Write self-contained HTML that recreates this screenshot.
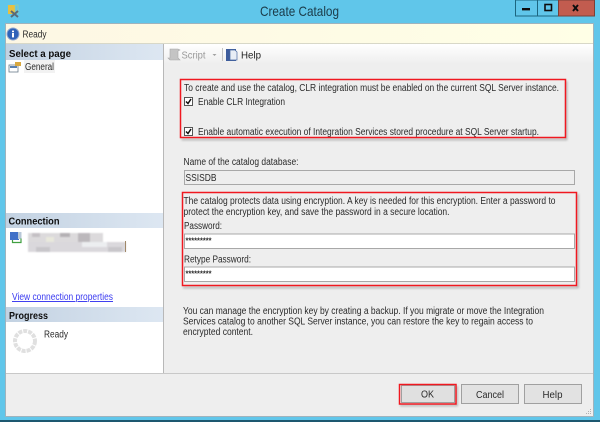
<!DOCTYPE html>
<html><head><meta charset="utf-8"><style>
html,body{margin:0;padding:0;background:#60c6ea;}
svg{display:block;}
text{font-family:"Liberation Sans",sans-serif;font-size:9.7px;fill:#2a2a2a;}
.b{font-weight:bold;fill:#111;font-size:10px;}
</style></head><body>
<svg width="600" height="422" viewBox="0 0 600 422" xmlns="http://www.w3.org/2000/svg">
<defs>
<linearGradient id="hd" x1="0" x2="1" y1="0" y2="0"><stop offset="0" stop-color="#c3d2e2"/><stop offset="1" stop-color="#dde7f2"/></linearGradient>
<linearGradient id="yl" x1="0" x2="1" y1="0" y2="0"><stop offset="0" stop-color="#fdf7e4"/><stop offset="1" stop-color="#ffffe6"/></linearGradient>
<linearGradient id="tb" x1="0" x2="0" y1="0" y2="1"><stop offset="0" stop-color="#ffffff"/><stop offset="1" stop-color="#eeeeee"/></linearGradient>
<filter id="s" x="-5%" y="-10%" width="110%" height="125%"><feGaussianBlur stdDeviation="1"/></filter>
<filter id="bl"><feGaussianBlur stdDeviation="0.3"/></filter>
<filter id="bl2"><feGaussianBlur stdDeviation="0.8"/></filter>
</defs>
<rect width="600" height="422" fill="#60c6ea"/>
<rect x="0" y="420" width="600" height="2" fill="#1d5870"/>
<rect x="5" y="23" width="589" height="394" fill="#9fb3bd"/>
<rect x="6" y="24" width="587" height="392" fill="#eeeeee"/>
<rect x="6" y="24" width="587" height="20" fill="url(#yl)"/>
<rect x="6" y="43" width="587" height="1" fill="#d8d8c8"/>
<rect x="6" y="44" width="157" height="329" fill="#ffffff"/>
<rect x="163" y="44" width="1" height="329" fill="#b8b8b8"/>
<rect x="6" y="373" width="587" height="1" fill="#c8c8c8"/>
<rect x="164" y="44" width="429" height="20" fill="url(#tb)"/>
<rect x="6" y="44" width="157" height="16" fill="url(#hd)"/>
<rect x="6" y="213" width="157" height="15" fill="url(#hd)"/>
<rect x="6" y="307" width="157" height="15" fill="url(#hd)"/>

<g filter="url(#bl)">
<!-- title -->
<text x="260" y="16" style="font-size:13.6px;fill:#1a3a48" lengthAdjust="spacingAndGlyphs" textLength="79">Create Catalog</text>
<!-- app icon -->
<rect x="8" y="5" width="7" height="9" fill="#e8c040"/>
<rect x="15" y="5" width="3" height="8" fill="none" stroke="#9ccf9c" stroke-width=".7"/>
<path d="M11 17l7-6M11 11l7 6" stroke="#5a6a78" stroke-width="2" fill="none"/>
<!-- window buttons -->
<rect x="515.5" y="0" width="22" height="16" fill="#60c6ea" stroke="#1f6680"/>
<rect x="537.5" y="0" width="21" height="16" fill="#60c6ea" stroke="#1f6680"/>
<rect x="558.5" y="0" width="36" height="16" fill="#c25c50" stroke="#7a4038"/>
<rect x="522" y="8" width="8" height="2.4" fill="#111"/>
<rect x="545" y="4.5" width="6.5" height="6" fill="none" stroke="#111" stroke-width="1.6"/>
<path d="M573 5l5 6M578 5l-5 6" stroke="#111" stroke-width="1.9"/>
<!-- Ready bar -->
<circle cx="13" cy="34" r="6" fill="#2f62b8" stroke="#8fa8d0"/>
<rect x="12" y="33" width="2" height="4.4" fill="#fff"/><rect x="12" y="30.6" width="2" height="1.6" fill="#fff"/>
<text x="22.5" y="37.5" lengthAdjust="spacingAndGlyphs" textLength="24">Ready</text>
<!-- left -->
<text class="b" x="9" y="57" lengthAdjust="spacingAndGlyphs" textLength="62">Select a page</text>
<rect x="24" y="60" width="31" height="13" fill="#f2f2f2"/>
<text x="25" y="70" lengthAdjust="spacingAndGlyphs" textLength="29">General</text>
<rect x="9" y="65" width="9" height="7" fill="#fff" stroke="#6a7a8a" stroke-width=".8"/>
<rect x="10" y="66" width="7" height="2" fill="#5a80b0"/>
<path d="M15 62h6v4h-6z" fill="#d8a840"/>
<text class="b" x="8.5" y="224.5" lengthAdjust="spacingAndGlyphs" textLength="51">Connection</text>
<rect x="10" y="232" width="9" height="8" fill="#4070c8"/>
<rect x="18" y="232" width="3.5" height="7" fill="#b8c8d8"/>
<path d="M12.5 240v2.5h8.5v-4" stroke="#40a040" stroke-width="1.2" fill="none"/>
<text x="12" y="300" lengthAdjust="spacingAndGlyphs" textLength="101" style="fill:#3a3af0;text-decoration:underline">View connection properties</text>
<text class="b" x="9" y="319" lengthAdjust="spacingAndGlyphs" textLength="39">Progress</text>
<text x="44" y="337.5" lengthAdjust="spacingAndGlyphs" textLength="24">Ready</text>
<circle cx="25" cy="341" r="10" fill="none" stroke="#e0e0e0" stroke-width="4" stroke-dasharray="4 1"/>
<!-- toolbar -->
<path d="M170 49h8l2 1-2 1v7l2 2h-10l-2-2h2v-7z" fill="#c4c4c4" stroke="#a8a8a8" stroke-width=".6"/>
<text x="181.5" y="58.5" style="fill:#9a9a9a" lengthAdjust="spacingAndGlyphs" textLength="24">Script</text>
<path d="M212.5 54h4l-2 2z" fill="#a0a0a0"/>
<rect x="222" y="48" width="1" height="13" fill="#c4c4c4"/>
<rect x="226" y="49" width="10" height="12" fill="#3c5c9c"/>
<path d="M230 50h5l2 2v8h-7z" fill="#e8eef6" stroke="#4a6aa0" stroke-width=".7"/>
<text x="241" y="58.5" style="fill:#222" lengthAdjust="spacingAndGlyphs" textLength="20">Help</text>
<!-- section 1 -->
<text x="184" y="91" lengthAdjust="spacingAndGlyphs" textLength="375">To create and use the catalog, CLR integration must be enabled on the current SQL Server instance.</text>
<rect x="184.5" y="97.5" width="8" height="8" fill="#fff" stroke="#555"/>
<path d="M186 101.5l2 2 3-4.5" stroke="#111" stroke-width="1.5" fill="none"/>
<text x="198" y="105" lengthAdjust="spacingAndGlyphs" textLength="87">Enable CLR Integration</text>
<rect x="184.5" y="127.5" width="8" height="8" fill="#fff" stroke="#555"/>
<path d="M186 131.5l2 2 3-4.5" stroke="#111" stroke-width="1.5" fill="none"/>
<text x="198" y="135" lengthAdjust="spacingAndGlyphs" textLength="341">Enable automatic execution of Integration Services stored procedure at SQL Server startup.</text>
<!-- name -->
<text x="183.5" y="165" lengthAdjust="spacingAndGlyphs" textLength="115">Name of the catalog database:</text>
<rect x="184.5" y="170.5" width="390" height="14" fill="#eeeeee" stroke="#a8a8a8"/>
<text x="185.5" y="181" lengthAdjust="spacingAndGlyphs" textLength="31">SSISDB</text>
<!-- section 2 -->
<text x="183.5" y="204" lengthAdjust="spacingAndGlyphs" textLength="372">The catalog protects data using encryption. A key is needed for this encryption. Enter a password to</text>
<text x="183.5" y="215" lengthAdjust="spacingAndGlyphs" textLength="266">protect the encryption key, and save the password in a secure location.</text>
<text x="184" y="229" lengthAdjust="spacingAndGlyphs" textLength="38">Password:</text>
<rect x="184.5" y="234" width="390" height="14.5" fill="#fff" stroke="#a8a8a8"/>
<text x="185.5" y="243.5" style="font-size:8px;font-weight:bold" lengthAdjust="spacingAndGlyphs" textLength="26">*********</text>
<text x="184" y="262.5" lengthAdjust="spacingAndGlyphs" textLength="67">Retype Password:</text>
<rect x="184.5" y="267" width="390" height="14.5" fill="#fff" stroke="#a8a8a8"/>
<text x="185.5" y="276.5" style="font-size:8px;font-weight:bold" lengthAdjust="spacingAndGlyphs" textLength="26">*********</text>
<!-- notes -->
<text x="183" y="314" lengthAdjust="spacingAndGlyphs" textLength="361">You can manage the encryption key by creating a backup. If you migrate or move the Integration</text>
<text x="183" y="324.5" lengthAdjust="spacingAndGlyphs" textLength="350">Services catalog to another SQL Server instance, you can restore the key to regain access to</text>
<text x="183" y="335" lengthAdjust="spacingAndGlyphs" textLength="70">encrypted content.</text>
<!-- buttons -->
<rect x="401.5" y="385.5" width="53" height="17" fill="#e0e0e0" stroke="#a0a0a0"/>
<text x="421" y="397.5" style="font-size:10px" lengthAdjust="spacingAndGlyphs" textLength="13">OK</text>
<rect x="461.5" y="384.5" width="57" height="19" fill="#e2e2e2" stroke="#a0a0a0"/>
<text x="476" y="398" style="font-size:10px" lengthAdjust="spacingAndGlyphs" textLength="28">Cancel</text>
<rect x="524.5" y="384.5" width="57" height="19" fill="#e2e2e2" stroke="#a0a0a0"/>
<text x="542.5" y="398" style="font-size:10px" lengthAdjust="spacingAndGlyphs" textLength="20">Help</text>
<g fill="#b0b0b0"><rect x="590" y="413" width="1" height="1"/><rect x="588" y="413" width="1" height="1"/><rect x="586" y="413" width="1" height="1"/><rect x="590" y="411" width="1" height="1"/><rect x="588" y="411" width="1" height="1"/><rect x="590" y="409" width="1" height="1"/></g>
</g>
<!-- redacted server name -->
<g filter="url(#bl2)">
<rect x="28" y="233" width="75" height="9" fill="#dcdadc"/>
<rect x="28" y="242" width="98" height="10" fill="#dad8dc"/>
<rect x="32" y="233" width="8" height="4" fill="#c4c0c4"/>
<rect x="60" y="233" width="10" height="4" fill="#b4b0b4"/>
<rect x="78" y="233" width="12" height="9" fill="#bcb8bc"/>
<rect x="46" y="237" width="8" height="5" fill="#e8e8dc"/>
<rect x="82" y="242" width="25" height="5" fill="#eceef0"/>
<rect x="36" y="247" width="14" height="5" fill="#c8c6ca"/>
<rect x="108" y="247" width="14" height="5" fill="#c8c6ca"/>
</g>
<rect x="125" y="241" width="1" height="11" fill="#a08868"/>
<!-- red box shadows -->
<g fill="none" stroke="#000" stroke-opacity=".3" stroke-width="1.5" filter="url(#s)">
<path d="M566.5 81v58.5h-385"/>
<path d="M578 194v93.5h-395"/>
<path d="M457 386v19.5h-57"/>
</g>
<!-- red boxes -->
<g fill="none" stroke="#f01820" stroke-width="1.5">
<rect x="180.5" y="79.5" width="385" height="58"/>
<rect x="182.5" y="192.5" width="394" height="93"/>
<rect x="399.5" y="384.5" width="56.5" height="19.5"/>
</g>
</svg>
</body></html>
